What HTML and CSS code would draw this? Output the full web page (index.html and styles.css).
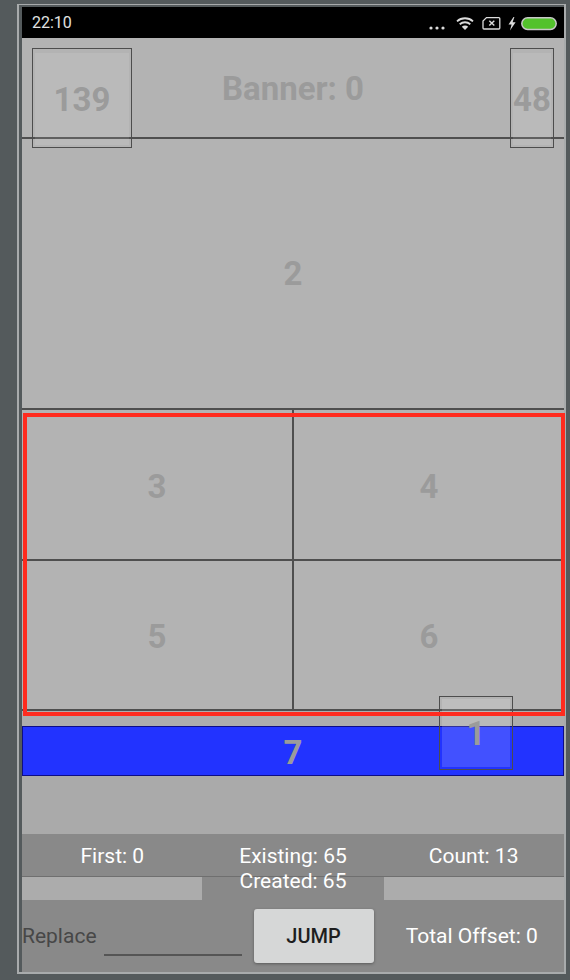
FILE: index.html
```html
<!DOCTYPE html>
<html>
<head>
<meta charset="utf-8">
<link rel="stylesheet" href="styles.css">
</head>
<body>
<div class="frame">
  <div class="screen">
    <div class="statusbar">
      <span class="time">22:10</span>
      <svg class="sicons" width="130" height="31" viewBox="0 0 130 31">
        <circle cx="4" cy="21" r="1.6" fill="#dcdcdc"/>
        <circle cx="10" cy="21" r="1.6" fill="#dcdcdc"/>
        <circle cx="16" cy="21" r="1.6" fill="#dcdcdc"/>
        <path d="M38 23 L34.8 19.8 A4.5 4.5 0 0 1 41.2 19.8 Z" fill="#dcdcdc"/>
        <path d="M32.7 17.2 A8.2 8.2 0 0 1 43.3 17.2" stroke="#dcdcdc" stroke-width="1.8" fill="none"/>
        <path d="M30 14.3 A12 12 0 0 1 46 14.3" stroke="#dcdcdc" stroke-width="1.8" fill="none"/>
        <path d="M59.5 10.6 H71.8 a1 1 0 0 1 1 1 V21 a1 1 0 0 1 -1 1 H57 a1 1 0 0 1 -1 -1 V14 Z" stroke="#dcdcdc" stroke-width="1.3" fill="none"/>
        <path d="M62.3 13.8 L67.3 18.6 M67.3 13.8 L62.3 18.6" stroke="#dcdcdc" stroke-width="1.4"/>
        <path d="M86.5 10 L81.5 17.6 H84.6 L83 23.5 L88.6 15.3 H85.6 L87.4 10 Z" fill="#dcdcdc"/>
        <rect x="94.8" y="10.8" width="34.4" height="11.6" rx="5.8" fill="#53c22c" stroke="#c9c9c9" stroke-width="1.5"/>
      </svg>
    </div>
    <div class="banner"><span class="big banner-text">Banner: 0</span></div>
    <div class="item2"><span class="big">2</span></div>
    <div class="grid">
      <div class="cell"><span class="big">3</span></div>
      <div class="cell"><span class="big">4</span></div>
      <div class="cell"><span class="big">5</span></div>
      <div class="cell"><span class="big">6</span></div>
    </div>
    <div class="gap"></div>
    <div class="blue"><span class="big">7</span></div>
    <div class="rest"></div>
    <div class="panel">
      <div class="stats">
        <div>First: 0</div>
        <div>Existing: 65<br>Created: 65</div>
        <div>Count: 13</div>
      </div>
      <div class="bars">
        <div class="bar"></div>
        <div></div>
        <div class="bar"></div>
      </div>
      <div class="controls">
        <span class="label">Replace</span>
        <span class="field"></span>
        <div class="jump">JUMP</div>
        <span class="offset">Total Offset: 0</span>
      </div>
    </div>

    <div class="ov ov139"><span class="big">139</span></div>
    <div class="ov ov48"><span class="big">48</span></div>
    <div class="ov ov1"><span class="big">1</span></div>
    <div class="redbox"></div>
  </div>
</div>
</body>
</html>
```
FILE: styles.css
```css
* { box-sizing: border-box; }

body {
  margin: 0;
  background: #545a5c;
  font-family: Roboto, "Liberation Sans", sans-serif;
}

.frame {
  margin: 4px 0 0 17px;
  width: 549px;
  border: solid #a8abac;
  border-width: 1px 2px 2px 2px;
  padding: 2px 0 0 3px;
}

.screen {
  position: relative;
  width: 542px;
  height: 965px;
  display: flex;
  flex-direction: column;
}

.statusbar {
  height: 31px;
  flex: none;
  background: #000;
  display: flex;
  align-items: center;
  justify-content: space-between;
  padding-left: 10px;
  padding-right: 7px;
}

.time {
  color: #e2e2e2;
  font-size: 16px;
  line-height: 20px;
  padding-top: 1px;
}

.sicons { display: block; }

.big {
  font-weight: 700;
  font-size: 33px;
  line-height: 33px;
  color: #9b9b9b;
}

.banner {
  height: 101px;
  flex: none;
  background: #b3b3b3;
  border-bottom: 2px solid #4f4f4f;
  display: flex;
  align-items: center;
  justify-content: center;
}

.banner-text { margin-top: 2px; }

.item2 {
  height: 271px;
  flex: none;
  background: #b3b3b3;
  border-bottom: 2px solid #4f4f4f;
  display: flex;
  align-items: center;
  justify-content: center;
}

.grid {
  height: 301px;
  flex: none;
  display: grid;
  grid-template-columns: 270px 270px;
  grid-template-rows: 149px 148px;
  gap: 2px;
  background: #4f4f4f;
  border-bottom: 2px solid #4f4f4f;
}

.cell {
  background: #b3b3b3;
  display: flex;
  align-items: center;
  justify-content: center;
  padding-top: 3px;
}

.gap {
  height: 15px;
  flex: none;
  background: #adadad;
}

.blue {
  height: 50px;
  flex: none;
  background: #2233ff;
  border: 1px solid #0d0d86;
  display: flex;
  align-items: center;
  justify-content: center;
  padding-top: 3px;
}

.rest {
  height: 58px;
  flex: none;
  background: #aaaaaa;
}

.panel {
  flex: 1;
  background: #898989;
  display: flex;
  flex-direction: column;
}

.stats {
  height: 42px;
  flex: none;
  display: grid;
  grid-template-columns: 1fr 1fr 1fr;
  padding-top: 9.5px;
  color: #fff;
  font-size: 21px;
  line-height: 25px;
  text-align: center;
  position: relative;
  z-index: 1;
  white-space: nowrap;
}

.bars {
  height: 24px;
  flex: none;
  border-top: 1px solid #6f6f6f;
  display: grid;
  grid-template-columns: 180px 1fr 180px;
}

.bar { background: #acacac; }

.controls {
  flex: 1;
  display: flex;
  align-items: center;
}

.label {
  color: #474747;
  font-size: 21px;
  line-height: 25px;
}

.field {
  width: 138px;
  height: 2px;
  background: #555;
  align-self: flex-end;
  margin: 0 0 16px 7px;
}

.jump {
  margin-left: 12px;
  width: 120px;
  height: 54px;
  background: #d6d7d7;
  border-radius: 3px;
  box-shadow: 0 1px 3px rgba(0, 0, 0, 0.35);
  display: flex;
  align-items: center;
  justify-content: center;
  font-size: 20px;
  font-weight: 500;
  color: #1e1e1e;
}

.offset {
  flex: 1;
  text-align: center;
  padding-left: 6px;
  color: #fff;
  font-size: 21px;
  line-height: 25px;
}

.ov {
  position: absolute;
  border: 1px solid #4d4d4d;
  padding: 2px;
  background: rgba(255, 255, 255, 0.1);
  background-clip: content-box;
  display: flex;
  align-items: center;
  justify-content: center;
}

.ov139 { left: 10px; top: 41px; width: 100px; height: 100px; padding-top: 4px; }
.ov48 { left: 488px; top: 41px; width: 44px; height: 100px; padding-top: 4px; }
.ov1 { left: 417px; top: 689px; width: 74px; height: 74px; background: rgba(255, 255, 255, 0.15); background-clip: content-box; }

.redbox {
  position: absolute;
  left: 1px;
  top: 406px;
  width: 542px;
  height: 303px;
  border: 4px solid #ff2b1e;
}
```
